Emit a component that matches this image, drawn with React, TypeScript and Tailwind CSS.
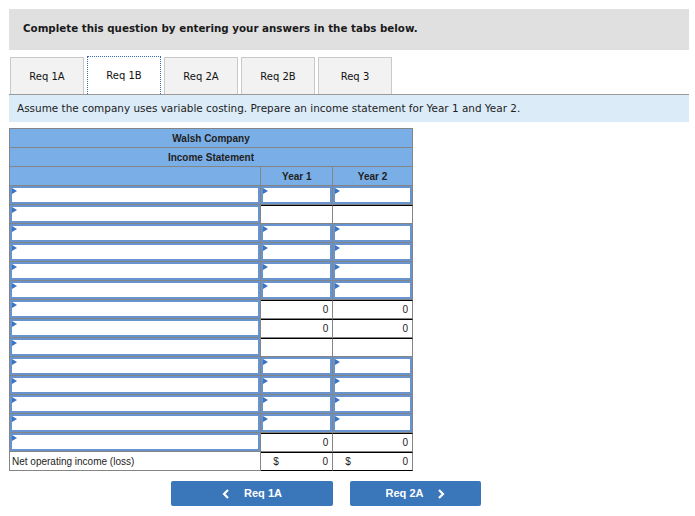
import React from "react";

const BLUE_HDR = "bg-[#7aaee6]";

function Tri() {
  return (
    <svg className="absolute left-0 top-0" width="5" height="6" viewBox="0 0 5 6">
      <polygon points="0,0 5,3 0,6" fill="#3b74c4" />
    </svg>
  );
}

function InputBox() {
  return (
    <div className="relative h-full w-full border-2 border-[#6793cf] bg-white">
      <Tri />
    </div>
  );
}

type Kind = "input" | "empty" | "zero";

function YearCell({ kind, w, black }: { kind: Kind; w: string; black?: boolean }) {
  const base = `${w} h-[19px] border-r border-[#858585] box-border`;
  if (kind === "input") {
    return (
      <div className={`${base} border-b`}>
        <InputBox />
      </div>
    );
  }
  return (
    <div
      className={`${base} border-b border-b-[#858585] ${black ? "border-t border-t-black" : ""} flex items-center justify-end pr-[4px] text-[10px] text-[#222]`}
    >
      {kind === "zero" ? "0" : ""}
    </div>
  );
}

const rows: { y1: Kind; y2: Kind; black?: boolean }[] = [
  { y1: "input", y2: "input" },
  { y1: "empty", y2: "empty", black: true },
  { y1: "input", y2: "input" },
  { y1: "input", y2: "input" },
  { y1: "input", y2: "input" },
  { y1: "input", y2: "input" },
  { y1: "zero", y2: "zero", black: true },
  { y1: "zero", y2: "zero", black: true },
  { y1: "empty", y2: "empty", black: true },
  { y1: "input", y2: "input" },
  { y1: "input", y2: "input" },
  { y1: "input", y2: "input" },
  { y1: "input", y2: "input" },
  { y1: "zero", y2: "zero", black: true },
];

export default function App() {
  const tabs = ["Req 1A", "Req 1B", "Req 2A", "Req 2B", "Req 3"];
  return (
    <div className="w-[695px] h-[516px] bg-white pl-[9px] pt-[9px] font-['DejaVu_Sans',Verdana,sans-serif] text-[#222]">
      <div className="w-[680px] h-[41px] bg-[#e0e0e0] flex items-center pl-[14px] pb-[2px]">
        <span className="text-[10.3px] font-bold text-[#1a1a1a]">
          Complete this question by entering your answers in the tabs below.
        </span>
      </div>
      <div className="flex items-end gap-[3px] pl-[1px] h-[44px]">
        {tabs.map((t, i) =>
          i === 1 ? (
            <div
              key={t}
              className="w-[74px] h-[38px] bg-white border border-dotted border-[#3868b0] border-b-0 flex items-center justify-center text-[10px] text-[#111]"
            >
              {t}
            </div>
          ) : (
            <div
              key={t}
              className="w-[74px] h-[37px] bg-[#f2f2f2] border border-[#c9c9c9] border-b-0 flex items-center justify-center text-[10px] text-[#111]"
            >
              {t}
            </div>
          )
        )}
      </div>
      <div className="w-[680px] h-[28px] bg-[#dbebf8] border-t border-[#9a9a9a] flex items-center pl-[8px] pt-[1px]">
        <span className="text-[10.45px] text-[#222]">
          Assume the company uses variable costing. Prepare an income statement for Year 1 and Year 2.
        </span>
      </div>

      <div className="mt-[6px] w-[404px] border-l border-t border-[#858585] font-['Liberation_Sans',Arial,sans-serif]">
        <div className={`h-[19px] ${BLUE_HDR} border-r border-b border-[#858585] flex items-center justify-center text-[10px] font-bold text-[#222]`}>
          Walsh Company
        </div>
        <div className={`h-[19px] ${BLUE_HDR} border-r border-b border-[#858585] flex items-center justify-center text-[10px] font-bold text-[#222]`}>
          Income Statement
        </div>
        <div className="flex">
          <div className={`w-[252px] h-[19px] ${BLUE_HDR} border-r border-b border-[#858585]`} />
          <div className={`w-[72px] h-[19px] ${BLUE_HDR} border-r border-b border-[#858585] flex items-center justify-center text-[10px] font-bold text-[#222]`}>
            Year 1
          </div>
          <div className={`w-[80px] h-[19px] ${BLUE_HDR} border-r border-b border-[#858585] flex items-center justify-center text-[10px] font-bold text-[#222]`}>
            Year 2
          </div>
        </div>
        {rows.map((r, i) => (
          <div key={i} className="flex">
            <div className="w-[252px] h-[19px] border-r border-b border-[#858585]">
              <InputBox />
            </div>
            <YearCell kind={r.y1} w="w-[72px]" black={r.black} />
            <YearCell kind={r.y2} w="w-[80px]" black={r.black} />
          </div>
        ))}
        <div className="flex">
          <div className="w-[252px] h-[19px] border-r border-b border-[#858585] flex items-center pl-[2px] text-[10px] text-[#222]">
            Net operating income (loss)
          </div>
          <div className="w-[72px] h-[19px] border-r border-[#858585] border-t border-t-black border-b border-b-black flex items-center justify-between pl-[12px] pr-[4px] text-[10px] text-[#222]">
            <span>$</span>
            <span>0</span>
          </div>
          <div className="w-[80px] h-[19px] border-r border-[#858585] border-t border-t-black border-b border-b-black flex items-center justify-between pl-[12px] pr-[4px] text-[10px] text-[#222]">
            <span>$</span>
            <span>0</span>
          </div>
        </div>
      </div>

      <div className="mt-[10px] flex gap-[17px] pl-[162px] font-['Liberation_Sans',Arial,sans-serif]">
        <button className="w-[162px] h-[25px] bg-[#3a76ba] rounded-[2px] flex items-center justify-center gap-[10px] text-white text-[11px] font-bold">
          <svg width="8" height="10" viewBox="0 0 8 10">
            <polyline points="6,1 2,5 6,9" fill="none" stroke="white" strokeWidth="2.2" />
          </svg>
          <span className="ml-[4px]">Req 1A</span>
        </button>
        <button className="w-[131px] h-[25px] bg-[#3a76ba] rounded-[2px] flex items-center justify-center gap-[10px] text-white text-[11px] font-bold">
          <span className="mr-[4px]">Req 2A</span>
          <svg width="8" height="10" viewBox="0 0 8 10">
            <polyline points="2,1 6,5 2,9" fill="none" stroke="white" strokeWidth="2.2" />
          </svg>
        </button>
      </div>
    </div>
  );
}
